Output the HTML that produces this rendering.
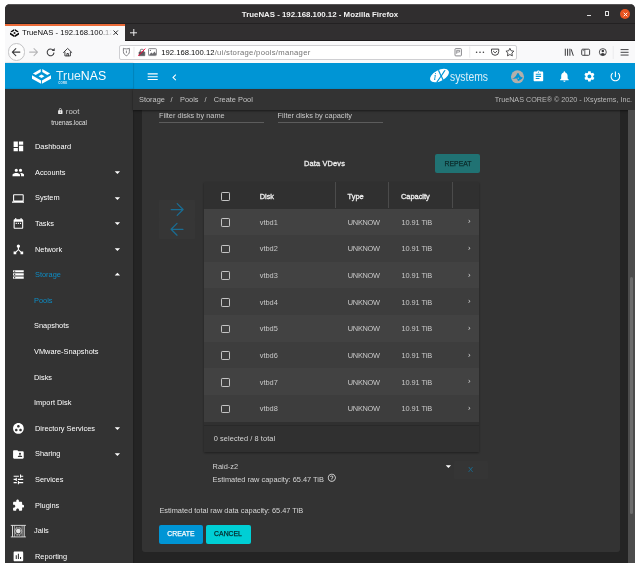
<!DOCTYPE html>
<html lang="en">
<head>
<meta charset="utf-8">
<title>TrueNAS - 192.168.100.12</title>
<style>
*{box-sizing:border-box;margin:0;padding:0}
html,body{width:640px;height:568px;overflow:hidden;background:#fff}
body{position:relative;font-family:"Liberation Sans",sans-serif;color:#fff}
.abs,.t{position:absolute}
.t{white-space:nowrap;line-height:1;transform:translateY(-50%)}
#win{position:absolute;left:5px;top:4px;width:630px;height:558.5px;background:#242424;border-radius:5px 5px 0 0;overflow:hidden}
#pg{position:absolute;left:-5px;top:-4px;width:640px;height:568px;filter:blur(0.3px)}
#titlebar{left:0;top:4px;width:640px;height:19.5px;background:#302e2f;border-top:0.7px solid #575556;border-bottom:0.6px solid #232122}
#tabbar{left:0;top:23.5px;width:640px;height:17.5px;background:#312f30;border-bottom:0.7px solid #1c1a1b}
#tab{left:0;top:24px;width:124.7px;height:17px;background:#f9f9fa}
#tabline{left:0;top:24.1px;width:124.7px;height:1.8px;background:#ea6a38}
#navbar{left:0;top:41px;width:640px;height:22px;background:#f9f9fa}
#urlbar{left:118.7px;top:44.6px;width:398.6px;height:15.2px;background:#fff;border:0.6px solid #cfcfd2;border-radius:2px}
#hdr{left:0;top:63px;width:640px;height:26px;background:#0095d5}
#side{left:0;top:89px;width:133px;height:479px;background:#333;box-shadow:0.5px 0 1.5px rgba(0,0,0,.35)}
#logoshadow{left:0;top:63px;width:133px;height:26px;box-shadow:0.5px 0 1.5px rgba(0,0,0,.3)}
#crumb{left:133px;top:89px;width:507px;height:21.4px;background:#333;box-shadow:0 1px 2px rgba(0,0,0,.5)}
#card{left:142px;top:89px;width:478px;height:463px;background:#333;border-radius:0 0 3px 3px}
#sbtrack{left:628px;top:110.4px;width:12px;height:458px;background:#4c4c4c}
#sbthumb{left:630px;top:277px;width:3px;height:237px;background:#6c6c6c;border-radius:1.5px}
.row{left:203.5px;width:276.2px;height:26.6px}
</style>
</head>
<body>
<div id="win"><div id="pg">
<div class="abs" id="titlebar"></div>
<div class="abs" id="tabbar"></div>
<div class="abs" id="tab"></div>
<div class="abs" id="tabline"></div>
<div class="abs" id="navbar"></div>
<div class="abs" id="urlbar"></div>
<div class="abs" id="hdr"></div>
<div class="abs" id="logoshadow"></div>
<div class="abs" id="card"></div>
<div class="abs" id="side"></div>
<div class="abs" id="crumb"></div>
<div class="abs" id="sbtrack"></div>
<div class="abs" id="sbthumb"></div>
<span class="t" style="left:35.00px;top:147.20px;font-size:7.40px;color:#fff">Dashboard</span>
<svg class="abs" style="left:11.60px;top:140.35px" width="12.80" height="12.80" viewBox="0 0 24 24"><path fill="#fff" d="M3 13h8V3H3v10zm0 8h8v-6H3v6zm10 0h8V11h-8v10zm0-18v6h8V3h-8z"/></svg>
<span class="t" style="left:35.00px;top:172.80px;font-size:7.40px;color:#fff">Accounts</span>
<svg class="abs" style="left:11.60px;top:165.95px" width="12.80" height="12.80" viewBox="0 0 24 24"><path fill="#fff" d="M16 11c1.66 0 2.99-1.34 2.99-3S17.66 5 16 5c-1.66 0-3 1.34-3 3s1.34 3 3 3zm-8 0c1.66 0 2.99-1.34 2.99-3S9.66 5 8 5C6.34 5 5 6.34 5 8s1.34 3 3 3zm0 2c-2.33 0-7 1.17-7 3.5V19h14v-2.500c0-2.330-4.670-3.500-7-3.500zm8 0c-.29 0-.62.02-.97.05 1.160.84 1.970 1.970 1.970 3.450V19h6v-2.500c0-2.330-4.670-3.500-7-3.500z"/></svg>
<svg class="abs" style="left:111.10px;top:165.95px" width="12.80" height="12.80" viewBox="0 0 24 24"><path fill="#fff" d="M7 10l5 5 5-5z"/></svg>
<span class="t" style="left:35.00px;top:198.40px;font-size:7.40px;color:#fff">System</span>
<svg class="abs" style="left:11.60px;top:191.55px" width="12.80" height="12.80" viewBox="0 0 24 24"><path fill="#fff" d="M20 18c1.100 0 2-.9 2-2V6c0-1.100-.9-2-2-2H4c-1.100 0-2 .9-2 2v10c0 1.100.9 2 2 2H0v2h24v-2h-4zM4 6h16v10H4V6z"/></svg>
<svg class="abs" style="left:111.10px;top:191.55px" width="12.80" height="12.80" viewBox="0 0 24 24"><path fill="#fff" d="M7 10l5 5 5-5z"/></svg>
<span class="t" style="left:35.00px;top:224.00px;font-size:7.40px;color:#fff">Tasks</span>
<svg class="abs" style="left:11.60px;top:217.15px" width="12.80" height="12.80" viewBox="0 0 24 24"><path fill="#fff" d="M9 11H7v2h2v-2zm4 0h-2v2h2v-2zm4 0h-2v2h2v-2zm2-7h-1V2h-2v2H8V2H6v2H5c-1.110 0-1.990.9-1.990 2L3 20c0 1.100.89 2 2 2h14c1.100 0 2-.9 2-2V6c0-1.100-.9-2-2-2zm0 16H5V9h14v11z"/></svg>
<svg class="abs" style="left:111.10px;top:217.15px" width="12.80" height="12.80" viewBox="0 0 24 24"><path fill="#fff" d="M7 10l5 5 5-5z"/></svg>
<span class="t" style="left:35.00px;top:249.60px;font-size:7.40px;color:#fff">Network</span>
<svg class="abs" style="left:11.60px;top:242.75px" width="12.80" height="12.80" viewBox="0 0 24 24"><path fill="#fff" d="M17 16l-4-4V8.820C14.160 8.400 15 7.300 15 6c0-1.660-1.340-3-3-3S9 4.340 9 6c0 1.300.84 2.400 2 2.820V12l-4 4H3v5h5v-3.050l4-4.200 4 4.200V21h5v-5h-4z"/></svg>
<svg class="abs" style="left:111.10px;top:242.75px" width="12.80" height="12.80" viewBox="0 0 24 24"><path fill="#fff" d="M7 10l5 5 5-5z"/></svg>
<span class="t" style="left:35.00px;top:275.20px;font-size:7.40px;color:#0d8cc4">Storage</span>
<svg class="abs" style="left:11.60px;top:268.35px" width="12.80" height="12.80" viewBox="0 0 24 24"><path fill="#fff" d="M2 20h20v-4H2v4zm2-3h2v2H4v-2zM2 4v4h20V4H2zm4 3H4V5h2v2zm-4 7h20v-4H2v4zm2-3h2v2H4v-2z"/></svg>
<svg class="abs" style="left:111.10px;top:268.35px" width="12.80" height="12.80" viewBox="0 0 24 24"><path fill="#fff" d="M7 14l5-5 5 5z"/></svg>
<span class="t" style="left:34.00px;top:300.80px;font-size:7.40px;color:#0d8cc4">Pools</span>
<span class="t" style="left:34.00px;top:326.40px;font-size:7.40px;color:#fff">Snapshots</span>
<span class="t" style="left:34.00px;top:352.00px;font-size:7.40px;color:#fff">VMware-Snapshots</span>
<span class="t" style="left:34.00px;top:377.60px;font-size:7.40px;color:#fff">Disks</span>
<span class="t" style="left:34.00px;top:403.20px;font-size:7.40px;color:#fff">Import Disk</span>
<span class="t" style="left:35.00px;top:428.80px;font-size:7.40px;color:#fff">Directory Services</span>
<svg class="abs" style="left:11.60px;top:421.95px" width="12.80" height="12.80" viewBox="0 0 24 24"><path fill="#fff" d="M12 2C6.480 2 2 6.480 2 12s4.480 10 10 10 10-4.480 10-10S17.520 2 12 2zM8 17.500c-1.380 0-2.500-1.120-2.500-2.500s1.120-2.500 2.500-2.500 2.500 1.120 2.500 2.500-1.120 2.500-2.500 2.500zM9.500 8c0-1.380 1.120-2.500 2.500-2.500s2.500 1.120 2.500 2.500-1.120 2.500-2.500 2.500S9.500 9.380 9.500 8zm6.500 9.500c-1.380 0-2.500-1.120-2.500-2.500s1.120-2.500 2.500-2.500 2.500 1.120 2.500 2.500-1.120 2.500-2.500 2.500z"/></svg>
<svg class="abs" style="left:111.10px;top:421.95px" width="12.80" height="12.80" viewBox="0 0 24 24"><path fill="#fff" d="M7 10l5 5 5-5z"/></svg>
<span class="t" style="left:35.00px;top:454.40px;font-size:7.40px;color:#fff">Sharing</span>
<svg class="abs" style="left:11.60px;top:447.55px" width="12.80" height="12.80" viewBox="0 0 24 24"><path fill="#fff" d="M20 6h-8l-2-2H4c-1.100 0-1.990.9-1.990 2L2 18c0 1.100.9 2 2 2h16c1.100 0 2-.9 2-2V8c0-1.100-.9-2-2-2zm-5 3c1.100 0 2 .9 2 2s-.9 2-2 2-2-.9-2-2 .9-2 2-2zm4 8h-8v-1c0-1.330 2.670-2 4-2s4 .67 4 2v1z"/></svg>
<svg class="abs" style="left:111.10px;top:447.55px" width="12.80" height="12.80" viewBox="0 0 24 24"><path fill="#fff" d="M7 10l5 5 5-5z"/></svg>
<span class="t" style="left:35.00px;top:480.00px;font-size:7.40px;color:#fff">Services</span>
<svg class="abs" style="left:11.60px;top:473.15px" width="12.80" height="12.80" viewBox="0 0 24 24"><path fill="#fff" d="M3 17v2h6v-2H3zM3 5v2h10V5H3zm10 16v-2h8v-2h-8v-2h-2v6h2zM7 9v2H3v2h4v2h2V9H7zm14 4v-2H11v2h10zm-6-4h2V7h4V5h-4V3h-2v6z"/></svg>
<span class="t" style="left:35.00px;top:505.60px;font-size:7.40px;color:#fff">Plugins</span>
<svg class="abs" style="left:11.60px;top:498.75px" width="12.80" height="12.80" viewBox="0 0 24 24"><path fill="#fff" d="M20.500 11H19V7c0-1.100-.9-2-2-2h-4V3.500C13 2.120 11.880 1 10.500 1S8 2.120 8 3.500V5H4c-1.100 0-1.990.9-1.990 2v3.800H3.500c1.490 0 2.700 1.210 2.700 2.700s-1.210 2.700-2.700 2.700H2V20c0 1.100.9 2 2 2h3.800v-1.500c0-1.490 1.210-2.700 2.700-2.700 1.490 0 2.700 1.210 2.700 2.700V22H17c1.100 0 2-.9 2-2v-4h1.500c1.380 0 2.500-1.120 2.500-2.500S21.880 11 20.500 11z"/></svg>
<span class="t" style="left:34.00px;top:531.20px;font-size:7.40px;color:#fff">Jails</span>
<span class="t" style="left:35.00px;top:556.80px;font-size:7.40px;color:#fff">Reporting</span>
<svg class="abs" style="left:11.60px;top:549.95px" width="12.80" height="12.80" viewBox="0 0 24 24"><path fill="#fff" d="M19 3H5c-1.100 0-2 .9-2 2v14c0 1.100.9 2 2 2h14c1.100 0 2-.9 2-2V5c0-1.100-.9-2-2-2zM9 17H7v-7h2v7zm4 0h-2V7h2v10zm4 0h-2v-4h2v4z"/></svg>
<svg class="abs" style="left:57.40px;top:107.70px" width="6.60" height="6.60" viewBox="0 0 24 24"><path fill="#eee" d="M18 8h-1V6c0-2.760-2.240-5-5-5S7 3.240 7 6v2H6c-1.100 0-2 .9-2 2v10c0 1.100.9 2 2 2h12c1.100 0 2-.9 2-2V10c0-1.100-.9-2-2-2zm-6 9c-1.100 0-2-.9-2-2s.9-2 2-2 2 .9 2 2-.9 2-2 2zm3.100-9H8.900V6c0-1.710 1.390-3.100 3.100-3.100 1.710 0 3.100 1.390 3.100 3.100v2z"/></svg>
<span class="t" style="left:65.80px;top:111.75px;font-size:7.90px;color:#c8c8c8">root</span>
<span class="t" style="left:69.00px;top:122.75px;font-size:6.30px;color:#e0e0e0;transform:translate(-50%,-50%)">truenas.local</span>
<svg class="abs" style="left:145.80px;top:69.90px" width="13.40" height="13.40" viewBox="0 0 24 24"><path fill="#fff" d="M3 18h18v-2H3v2zm0-5h18v-2H3v2zm0-7v2h18V6H3z"/></svg>
<svg class="abs" style="left:167.60px;top:70.50px" width="12.80" height="12.80" viewBox="0 0 24 24"><path fill="#fff" d="M15.410 7.410L14 6l-6 6 6 6 1.410-1.410L10.830 12z"/></svg>
<svg class="abs" style="left:532.40px;top:70.20px" width="12.80" height="12.80" viewBox="0 0 24 24"><path fill="#fff" d="M19 3h-4.180C14.400 1.840 13.300 1 12 1c-1.300 0-2.400.84-2.820 2H5c-1.100 0-2 .9-2 2v14c0 1.100.9 2 2 2h14c1.100 0 2-.9 2-2V5c0-1.100-.9-2-2-2zm-7 0c.55 0 1 .45 1 1s-.45 1-1 1-1-.45-1-1 .45-1 1-1zm2 14H7v-2h7v2zm3-4H7v-2h10v2zm0-4H7V7h10v2z"/></svg>
<svg class="abs" style="left:558.00px;top:70.20px" width="12.80" height="12.80" viewBox="0 0 24 24"><path fill="#fff" d="M12 22c1.100 0 2-.9 2-2h-4c0 1.100.89 2 2 2zm6-6v-5c0-3.070-1.640-5.640-4.500-6.320V4c0-.83-.67-1.500-1.500-1.500s-1.500.67-1.500 1.500v.68C7.630 5.360 6 7.920 6 11v5l-2 2v1h16v-1l-2-2z"/></svg>
<svg class="abs" style="left:583.40px;top:70.20px" width="12.80" height="12.80" viewBox="0 0 24 24"><path fill="#fff" d="M19.140 12.940c.04-.3.06-.61.06-.94 0-.32-.02-.64-.07-.94l2.030-1.580c.18-.14.23-.41.12-.61l-1.920-3.320c-.12-.22-.37-.29-.59-.22l-2.390.96c-.5-.38-1.030-.7-1.620-.94l-.36-2.540c-.04-.24-.24-.41-.48-.41h-3.840c-.24 0-.43.17-.47.41l-.36 2.540c-.59.24-1.130.57-1.620.94l-2.390-.96c-.22-.08-.47 0-.59.22L2.740 8.870c-.12.21-.08.47.12.61l2.030 1.580c-.05.3-.09.63-.09.94s.02.64.07.94l-2.030 1.580c-.18.14-.23.41-.12.61l1.920 3.320c.12.22.37.29.59.22l2.390-.96c.5.38 1.030.7 1.620.94l.36 2.540c.05.24.24.41.48.41h3.840c.24 0 .44-.17.47-.41l.36-2.540c.59-.24 1.130-.56 1.620-.94l2.390.96c.22.08.47 0 .59-.22l1.920-3.320c.12-.22.07-.47-.12-.61l-2.010-1.580zM12 15.600c-1.980 0-3.600-1.620-3.600-3.600s1.620-3.600 3.600-3.600 3.600 1.620 3.600 3.600-1.620 3.600-3.600 3.600z"/></svg>
<svg class="abs" style="left:609.20px;top:70.20px" width="12.80" height="12.80" viewBox="0 0 24 24"><path fill="#fff" d="M13 3h-2v10h2V3zm4.830 2.170l-1.420 1.420C17.990 7.860 19 9.810 19 12c0 3.870-3.130 7-7 7s-7-3.130-7-7c0-2.190 1.010-4.140 2.580-5.420L6.170 5.170C4.230 6.820 3 9.260 3 12c0 4.970 4.030 9 9 9s9-4.030 9-9c0-2.740-1.230-5.180-3.170-6.830z"/></svg>
<span class="t" style="left:139.00px;top:100.25px;font-size:7.40px;color:#c4c4c4">Storage</span>
<span class="t" style="left:170.60px;top:100.25px;font-size:7.40px;color:#c4c4c4">/</span>
<span class="t" style="left:180.00px;top:100.25px;font-size:7.40px;color:#c4c4c4">Pools</span>
<span class="t" style="left:204.40px;top:100.25px;font-size:7.40px;color:#c4c4c4">/</span>
<span class="t" style="left:213.80px;top:100.25px;font-size:7.40px;color:#c4c4c4">Create Pool</span>
<span class="t" style="left:632.00px;top:100.25px;font-size:7.20px;color:#b9b9b9;transform:translate(-100%,-50%)">TrueNAS CORE® © 2020 - iXsystems, Inc.</span>
<span class="t" style="left:159.00px;top:115.55px;font-size:7.40px;color:#c9c9c9">Filter disks by name</span>
<div class="abs" style="left:159px;top:122.1px;width:105px;height:0.6px;background:#5c5c5c"></div>
<span class="t" style="left:277.60px;top:115.55px;font-size:7.40px;color:#c9c9c9">Filter disks by capacity</span>
<div class="abs" style="left:277.6px;top:122.1px;width:105px;height:0.6px;background:#5c5c5c"></div>
<span class="t" style="left:324.50px;top:164.45px;font-size:7.40px;color:#ececec;letter-spacing:0.160px;transform:translate(-50%,-50%);-webkit-text-stroke:0.3px #ececec">Data VDevs</span>
<div class="abs" style="left:435.3px;top:154px;width:44.4px;height:19.2px;background:#207273;border-radius:2px"></div>
<span class="t" style="left:457.70px;top:163.85px;font-size:7.70px;color:#0b2a2a;letter-spacing:0.000px;transform:translate(-50%,-50%);-webkit-text-stroke:0.25px #0b2a2a;transform:translate(-50%,-50%) scaleX(.89)">REPEAT</span>
<div class="abs" style="left:158.6px;top:200.1px;width:36.3px;height:19.1px;background:#363636;border-radius:1.2px"></div>
<div class="abs" style="left:158.6px;top:219.4px;width:36.3px;height:19.3px;background:#363636;border-radius:1.2px"></div>
<svg class="abs" style="left:165px;top:200px" width="24" height="40" viewBox="165 200 24 40" fill="none" stroke="#1a6d93" stroke-width="1.25" stroke-linecap="round" stroke-linejoin="round"><path d="M171.2 209.5H183M177.2 203.6l5.9 5.9-5.9 5.900"/><path d="M183 229.300H171.200M177 223.400l-5.900 5.900 5.900 5.900"/></svg>
<div class="abs" style="left:203.6px;top:182.2px;width:275.4px;height:270px;background:#303030;box-shadow:0 1px 2px rgba(0,0,0,.38)"></div>
<div class="abs" style="left:203.6px;top:208.50px;width:275.4px;height:26.70px;background:#424242"></div>
<div class="abs" style="left:203.6px;top:235.14px;width:275.4px;height:26.70px;background:#3d3d3d"></div>
<div class="abs" style="left:203.6px;top:261.78px;width:275.4px;height:26.70px;background:#424242"></div>
<div class="abs" style="left:203.6px;top:288.42px;width:275.4px;height:26.70px;background:#3d3d3d"></div>
<div class="abs" style="left:203.6px;top:315.06px;width:275.4px;height:26.70px;background:#424242"></div>
<div class="abs" style="left:203.6px;top:341.70px;width:275.4px;height:26.70px;background:#3d3d3d"></div>
<div class="abs" style="left:203.6px;top:368.34px;width:275.4px;height:26.70px;background:#424242"></div>
<div class="abs" style="left:203.6px;top:394.98px;width:275.4px;height:26.70px;background:#3d3d3d"></div>
<div class="abs" style="left:203.6px;top:425px;width:275.4px;height:0.6px;background:#292929"></div>
<div class="abs" style="left:334.6px;top:182.2px;width:0.6px;height:26.3px;background:#4b4b4b"></div>
<div class="abs" style="left:388.3px;top:182.2px;width:0.6px;height:26.3px;background:#4b4b4b"></div>
<div class="abs" style="left:452.2px;top:182.2px;width:0.6px;height:26.3px;background:#4b4b4b"></div>
<div class="abs" style="left:221.00px;top:192.30px;width:8.8px;height:8.8px;border:1.05px solid #c4c4c4;border-radius:1.2px"></div>
<span class="t" style="left:259.70px;top:197.15px;font-size:7.40px;color:#f0f0f0;-webkit-text-stroke:0.3px #f0f0f0">Disk</span>
<span class="t" style="left:347.60px;top:197.15px;font-size:7.40px;color:#f0f0f0;-webkit-text-stroke:0.3px #f0f0f0">Type</span>
<span class="t" style="left:401.00px;top:197.15px;font-size:7.40px;color:#f0f0f0;-webkit-text-stroke:0.3px #f0f0f0">Capacity</span>
<div class="abs" style="left:221.00px;top:217.90px;width:8.8px;height:8.8px;border:1.05px solid #c4c4c4;border-radius:1.2px"></div>
<span class="t" style="left:259.70px;top:222.75px;font-size:7.40px;color:#c8c8c8">vtbd1</span>
<span class="t" style="left:347.80px;top:222.75px;font-size:7.40px;color:#c8c8c8;letter-spacing:-0.280px">UNKNOW</span>
<span class="t" style="left:401.50px;top:222.75px;font-size:7.40px;color:#c8c8c8;letter-spacing:-0.080px">10.91 TiB</span>
<svg class="abs" style="left:465.70px;top:218.30px" width="6.60" height="6.60" viewBox="0 0 24 24"><path fill="#e0e0e0" d="M10 6L8.590 7.410 13.170 12l-4.580 4.590L10 18l6-6z"/></svg>
<div class="abs" style="left:221.00px;top:244.57px;width:8.8px;height:8.8px;border:1.05px solid #c4c4c4;border-radius:1.2px"></div>
<span class="t" style="left:259.70px;top:249.42px;font-size:7.40px;color:#c8c8c8">vtbd2</span>
<span class="t" style="left:347.80px;top:249.42px;font-size:7.40px;color:#c8c8c8;letter-spacing:-0.280px">UNKNOW</span>
<span class="t" style="left:401.50px;top:249.42px;font-size:7.40px;color:#c8c8c8;letter-spacing:-0.080px">10.91 TiB</span>
<svg class="abs" style="left:465.70px;top:244.97px" width="6.60" height="6.60" viewBox="0 0 24 24"><path fill="#e0e0e0" d="M10 6L8.590 7.410 13.170 12l-4.580 4.590L10 18l6-6z"/></svg>
<div class="abs" style="left:221.00px;top:271.24px;width:8.8px;height:8.8px;border:1.05px solid #c4c4c4;border-radius:1.2px"></div>
<span class="t" style="left:259.70px;top:276.09px;font-size:7.40px;color:#c8c8c8">vtbd3</span>
<span class="t" style="left:347.80px;top:276.09px;font-size:7.40px;color:#c8c8c8;letter-spacing:-0.280px">UNKNOW</span>
<span class="t" style="left:401.50px;top:276.09px;font-size:7.40px;color:#c8c8c8;letter-spacing:-0.080px">10.91 TiB</span>
<svg class="abs" style="left:465.70px;top:271.64px" width="6.60" height="6.60" viewBox="0 0 24 24"><path fill="#e0e0e0" d="M10 6L8.590 7.410 13.170 12l-4.580 4.590L10 18l6-6z"/></svg>
<div class="abs" style="left:221.00px;top:297.91px;width:8.8px;height:8.8px;border:1.05px solid #c4c4c4;border-radius:1.2px"></div>
<span class="t" style="left:259.70px;top:302.76px;font-size:7.40px;color:#c8c8c8">vtbd4</span>
<span class="t" style="left:347.80px;top:302.76px;font-size:7.40px;color:#c8c8c8;letter-spacing:-0.280px">UNKNOW</span>
<span class="t" style="left:401.50px;top:302.76px;font-size:7.40px;color:#c8c8c8;letter-spacing:-0.080px">10.91 TiB</span>
<svg class="abs" style="left:465.70px;top:298.31px" width="6.60" height="6.60" viewBox="0 0 24 24"><path fill="#e0e0e0" d="M10 6L8.590 7.410 13.170 12l-4.580 4.590L10 18l6-6z"/></svg>
<div class="abs" style="left:221.00px;top:324.58px;width:8.8px;height:8.8px;border:1.05px solid #c4c4c4;border-radius:1.2px"></div>
<span class="t" style="left:259.70px;top:329.43px;font-size:7.40px;color:#c8c8c8">vtbd5</span>
<span class="t" style="left:347.80px;top:329.43px;font-size:7.40px;color:#c8c8c8;letter-spacing:-0.280px">UNKNOW</span>
<span class="t" style="left:401.50px;top:329.43px;font-size:7.40px;color:#c8c8c8;letter-spacing:-0.080px">10.91 TiB</span>
<svg class="abs" style="left:465.70px;top:324.98px" width="6.60" height="6.60" viewBox="0 0 24 24"><path fill="#e0e0e0" d="M10 6L8.590 7.410 13.170 12l-4.580 4.590L10 18l6-6z"/></svg>
<div class="abs" style="left:221.00px;top:351.25px;width:8.8px;height:8.8px;border:1.05px solid #c4c4c4;border-radius:1.2px"></div>
<span class="t" style="left:259.70px;top:356.10px;font-size:7.40px;color:#c8c8c8">vtbd6</span>
<span class="t" style="left:347.80px;top:356.10px;font-size:7.40px;color:#c8c8c8;letter-spacing:-0.280px">UNKNOW</span>
<span class="t" style="left:401.50px;top:356.10px;font-size:7.40px;color:#c8c8c8;letter-spacing:-0.080px">10.91 TiB</span>
<svg class="abs" style="left:465.70px;top:351.65px" width="6.60" height="6.60" viewBox="0 0 24 24"><path fill="#e0e0e0" d="M10 6L8.590 7.410 13.170 12l-4.580 4.590L10 18l6-6z"/></svg>
<div class="abs" style="left:221.00px;top:377.92px;width:8.8px;height:8.8px;border:1.05px solid #c4c4c4;border-radius:1.2px"></div>
<span class="t" style="left:259.70px;top:382.77px;font-size:7.40px;color:#c8c8c8">vtbd7</span>
<span class="t" style="left:347.80px;top:382.77px;font-size:7.40px;color:#c8c8c8;letter-spacing:-0.280px">UNKNOW</span>
<span class="t" style="left:401.50px;top:382.77px;font-size:7.40px;color:#c8c8c8;letter-spacing:-0.080px">10.91 TiB</span>
<svg class="abs" style="left:465.70px;top:378.32px" width="6.60" height="6.60" viewBox="0 0 24 24"><path fill="#e0e0e0" d="M10 6L8.590 7.410 13.170 12l-4.580 4.590L10 18l6-6z"/></svg>
<div class="abs" style="left:221.00px;top:404.59px;width:8.8px;height:8.8px;border:1.05px solid #c4c4c4;border-radius:1.2px"></div>
<span class="t" style="left:259.70px;top:409.44px;font-size:7.40px;color:#c8c8c8">vtbd8</span>
<span class="t" style="left:347.80px;top:409.44px;font-size:7.40px;color:#c8c8c8;letter-spacing:-0.280px">UNKNOW</span>
<span class="t" style="left:401.50px;top:409.44px;font-size:7.40px;color:#c8c8c8;letter-spacing:-0.080px">10.91 TiB</span>
<svg class="abs" style="left:465.70px;top:404.99px" width="6.60" height="6.60" viewBox="0 0 24 24"><path fill="#e0e0e0" d="M10 6L8.590 7.410 13.170 12l-4.580 4.590L10 18l6-6z"/></svg>
<span class="t" style="left:213.80px;top:439.45px;font-size:7.40px;color:#d6d6d6;letter-spacing:0.070px">0 selected / 8 total</span>
<span class="t" style="left:212.60px;top:466.75px;font-size:7.40px;color:#d6d6d6">Raid-z2</span>
<span class="t" style="left:212.60px;top:480.45px;font-size:7.40px;color:#d6d6d6">Estimated raw capacity: 65.47 TiB</span>
<svg class="abs" style="left:327.00px;top:472.60px" width="9.60" height="9.60" viewBox="0 0 24 24"><path fill="#e0e0e0" d="M11 18h2v-2h-2v2zm1-16C6.480 2 2 6.480 2 12s4.480 10 10 10 10-4.480 10-10S17.520 2 12 2zm0 18c-4.410 0-8-3.590-8-8s3.590-8 8-8 8 3.590 8 8-3.590 8-8 8zm0-14c-2.210 0-4 1.790-4 4h2c0-1.100.9-2 2-2s2 .9 2 2c0 2-3 1.750-3 5h2c0-2.250 3-2.500 3-5 0-2.210-1.790-4-4-4z"/></svg>
<svg class="abs" style="left:442.10px;top:459.80px" width="12.80" height="12.80" viewBox="0 0 24 24"><path fill="#fff" d="M7 10l5 5 5-5z"/></svg>
<div class="abs" style="left:453.6px;top:461px;width:34.3px;height:18.4px;background:#353535;border-radius:1.2px"></div>
<span class="t" style="left:470.70px;top:470.05px;font-size:7.80px;color:#176f97;transform:translate(-50%,-50%)">X</span>
<span class="t" style="left:159.40px;top:511.25px;font-size:7.40px;color:#d6d6d6">Estimated total raw data capacity: 65.47 TiB</span>
<div class="abs" style="left:159px;top:525px;width:43.8px;height:18.8px;background:#0095d5;border-radius:2px"></div>
<span class="t" style="left:181.10px;top:534.25px;font-size:7.70px;color:#fff;letter-spacing:0.000px;transform:translate(-50%,-50%);-webkit-text-stroke:0.25px #fff;transform:translate(-50%,-50%) scaleX(.89)">CREATE</span>
<div class="abs" style="left:205.8px;top:525px;width:45.2px;height:18.8px;background:#00cfd5;border-radius:2px"></div>
<span class="t" style="left:228.30px;top:534.25px;font-size:7.70px;color:#06292a;letter-spacing:0.000px;transform:translate(-50%,-50%);-webkit-text-stroke:0.25px #06292a;transform:translate(-50%,-50%) scaleX(.89)">CANCEL</span>
<span class="t" style="left:320.00px;top:14.65px;font-size:7.86px;color:#f2f2f2;font-weight:bold;transform:translate(-50%,-50%)">TrueNAS - 192.168.100.12 - Mozilla Firefox</span>
<div class="abs" style="left:586.5px;top:15px;width:4.5px;height:0.8px;background:#e0e0e0"></div>
<div class="abs" style="left:604.7px;top:11.4px;width:4.6px;height:4.8px;border:0.9px solid #e4e4e4;border-radius:0.5px"></div>
<div class="abs" style="left:620px;top:8.9px;width:10.2px;height:10.2px;border-radius:50%;background:#e95420"></div>
<svg class="abs" style="left:622.6px;top:11.5px" width="5" height="5" viewBox="0 0 5 5"><path d="M0.700.7L4.300 4.300M4.300.7L0.700 4.300" stroke="#fff" stroke-width="0.95" fill="none"/></svg>
<span class="t" style="left:22px;top:33.1px;font-size:7.7px;color:#0c0c0d;width:91px;overflow:hidden;-webkit-mask-image:linear-gradient(90deg,#000 78px,transparent 90px)">TrueNAS - 192.168.100.12</span>
<svg class="abs" style="left:113.2px;top:30.400px" width="5.4" height="5.4" viewBox="0 0 5.400 5.400"><path d="M0.500.5L4.900 4.900M4.900.5L0.500 4.900" stroke="#2a2a2c" stroke-width="1" fill="none"/></svg>
<svg class="abs" style="left:129.900px;top:28.800px" width="7.6" height="7.6" viewBox="0 0 7.600 7.600"><path d="M3.800 0V7.600M0 3.800H7.600" stroke="#f4f4f4" stroke-width="0.95" fill="none"/></svg>
<span class="t" style="left:161.30px;top:52.75px;font-size:7.66px;color:#0c0c0d">192.168.100.12</span>
<span class="t" style="left:214.70px;top:52.75px;font-size:7.70px;color:#737373;letter-spacing:0.280px">/ui/storage/pools/manager</span>
<div class="abs" style="left:7.5px;top:43.35px;width:17.5px;height:17.500px;border-radius:50%;background:#fdfdfd;border:0.6px solid #c3c3c5"></div>
<svg class="abs" style="left:8px;top:44px" width="70" height="18" viewBox="8 44 70 18" fill="none" stroke-width="1.05" stroke-linecap="round" stroke-linejoin="round"><path d="M19.900 52.100H12.400M15.800 48.600l-3.500 3.500 3.500 3.500" stroke="#3b3b3d"/><path d="M29.600 52.100H37.400M34 48.600l3.500 3.500-3.500 3.500" stroke="#b6b6b8"/><path d="M53.300 50.300A3.400 3.400 0 1 0 53.950 52.900" stroke="#3b3b3d"/><path d="M54.700 48.100v3h-3z" fill="#3b3b3d" stroke="none"/><path d="M63.500 52.500L67.600 48.400 71.800 52.500M64.900 52v3.900h5.500V52M66.900 55.800v-2.300h1.500v2.300" stroke="#3b3b3d" stroke-width="0.95"/></svg>
<svg class="abs" style="left:120px;top:46px" width="40" height="13" viewBox="120 46 40 13" ><path d="M126.400 48.900c1.200 0 2.200-.25 3-.6v3.300c0 2-1.300 3.300-3 4.100-1.700-.8-3-2.100-3-4.100v-3.300c.8.35 1.800.6 3 .6z" stroke="#6c6c70" stroke-width="0.85" fill="none"/><path d="M126.400 50.600v2.500" stroke="#6c6c70" stroke-width="0.8"/><path d="M134 46.900v10.500" stroke="#dededf" stroke-width="0.6"/><path d="M139 52h5.800v3.700H139zM140.200 52v-1.200a1.700 1.700 0 0 1 3.400 0V52" fill="#5c5c5f" stroke="#5c5c5f" stroke-width="0.6"/><path d="M140.700 51.500v-.9a1.200 1.200 0 0 1 2.400 0v.9z" fill="#fff"/><path d="M138.300 55.900L145.300 48.600" stroke="#ff0039" stroke-width="0.95"/><rect x="148.500" y="48.650" width="7.900" height="6.900" rx="0.8" stroke="#6c6c70" stroke-width="0.8" fill="none"/><path d="M149 55l2.300-2.600 1.500 1.400 1.600-2.300 1.700 2.200V55z" fill="#6c6c70"/><circle cx="150.400" cy="50.400" r="0.650" fill="#6c6c70"/></svg>
<svg class="abs" style="left:452px;top:46px" width="64" height="13" viewBox="452 46 64 13" ><rect x="455" y="48.600" width="6.400" height="7.300" rx="0.800" stroke="#747478" stroke-width="0.85" fill="none"/><path d="M456.700 50.300v3.500M456.700 50.400h2.900v1.600h-2.900" stroke="#747478" stroke-width="0.7" fill="none"/><path d="M469.700 46.500v11.200" stroke="#dededf" stroke-width="0.6"/><circle cx="476.600" cy="52.200" r="0.800" fill="#3b3b3d"/><circle cx="480" cy="52.200" r="0.800" fill="#3b3b3d"/><circle cx="483.400" cy="52.200" r="0.800" fill="#3b3b3d"/><path d="M491.500 49.100h7.200v2.600a3.600 3.600 0 0 1-7.200 0z" stroke="#3b3b3d" stroke-width="0.95" fill="none" stroke-linejoin="round"/><path d="M493.400 51.300l1.700 1.600 1.700-1.600" stroke="#3b3b3d" stroke-width="0.9" fill="none" stroke-linecap="round" stroke-linejoin="round"/><path d="M509.900 48.300l1.220 2.480 2.730.4-1.980 1.930.47 2.720-2.440-1.290-2.440 1.290.47-2.720-1.980-1.930 2.730-.4z" stroke="#3b3b3d" stroke-width="0.9" fill="none" stroke-linejoin="round"/></svg>
<svg class="abs" style="left:562px;top:46px" width="70" height="13" viewBox="562 46 70 13" fill="none"><path d="M565.300 49.100v6.300M567.600 49.100v6.300M569.900 49.100v6.300M571.300 49.600l1.900 5.800" stroke="#3b3b3d" stroke-width="1" stroke-linecap="round"/><rect x="581.700" y="49.200" width="7.900" height="6.100" rx="1" stroke="#3b3b3d" stroke-width="0.95" fill="none"/><path d="M584.800 49.200v6.100" stroke="#3b3b3d" stroke-width="0.8"/><path d="M582.600 50.600h1.400" stroke="#3b3b3d" stroke-width="0.6"/><circle cx="602.800" cy="52.100" r="3.500" stroke="#3b3b3d" stroke-width="0.85" fill="none"/><circle cx="602.800" cy="51.100" r="1.250" fill="#3b3b3d"/><path d="M600.500 54.600a2.400 2.400 0 0 1 4.600 0 3.300 3.300 0 0 1-4.600 0z" fill="#3b3b3d"/><path d="M613.200 44.500v15" stroke="#e2e2e4" stroke-width="0.6"/><path d="M621 49.600h7.200M621 52.300h7.200M621 55.050h7.200" stroke="#3b3b3d" stroke-width="0.95" stroke-linecap="round"/></svg>
<svg class="abs" style="left:32.06px;top:69px" width="19" height="14.7" viewBox="65 80 304 235" preserveAspectRatio="none"><path fill="#fff" d="M80 152L205 80V128L125 175Z M354 152L229 80V128L309 175Z M170 195L217 167 264 195 217 223Z M65 180L210 262V315L65 235Z M369 180L224 262V315L369 235Z"/></svg>
<svg class="abs" style="left:10px;top:28.9px" width="9.1" height="8.2" viewBox="65 80 304 235" preserveAspectRatio="none"><path fill="#0c0c0d" d="M80 152L205 80V128L125 175Z M354 152L229 80V128L309 175Z M170 195L217 167 264 195 217 223Z M65 180L210 262V315L65 235Z M369 180L224 262V315L369 235Z"/></svg>
<svg class="abs" style="left:55px;top:66px" width="56" height="22" viewBox="55 66 56 22"><text x="56" y="79.500" font-family="Liberation Sans, sans-serif" font-size="12.600" fill="#fff" textLength="50.200" lengthAdjust="spacingAndGlyphs"><tspan fill-opacity="0.88">True</tspan>NAS</text><text x="58.300" y="84.400" font-family="Liberation Sans, sans-serif" font-size="2.900" font-weight="bold" fill="#d8eefa" textLength="8.900" lengthAdjust="spacing">CORE</text></svg>
<svg class="abs" style="left:428px;top:66px" width="66" height="22" viewBox="428 66 66 22"><ellipse cx="439.500" cy="75.600" rx="10.200" ry="5.500" transform="rotate(-27 439.500 75.600)" fill="#fff"/><text x="433.400" y="80.200" font-family="Liberation Serif, serif" font-style="italic" font-size="10.500" fill="#0095d5">i</text><text x="436.600" y="82.300" font-family="Liberation Sans, sans-serif" font-size="17" fill="#0095d5" textLength="9" lengthAdjust="spacingAndGlyphs" transform="skewX(-6)" style="transform-origin:441px 76px">X</text><text x="450" y="80.600" font-family="Liberation Sans, sans-serif" font-size="12" fill="#fff" fill-opacity="0.86" textLength="38" lengthAdjust="spacingAndGlyphs">systems</text></svg>
<svg class="abs" style="left:510px;top:69px" width="16" height="16" viewBox="510 69 16 16"><circle cx="517.500" cy="76.800" r="6.550" fill="#b2afab"/><path d="M511.900 78.500C514 78.300 515.800 76.800 516.700 74.400 517.100 73.500 517.600 73 518.050 73c.6 0 .9.900 1.400 1.900.7 1.400 1.900 2.300 3.450 2.700-.6.900-1.200 1.500-1.950 2-.9.700-1.600 1.200-2.350 1.300-.7-.2-1.200-.700-1.300-1.500-.100-.5-.300-.8-.800-.8-.9.100-2.700.300-4.550-.100z" fill="#0095d5"/><circle cx="518.250" cy="78.250" r="0.700" fill="#b2afab"/></svg>
<svg class="abs" style="left:10px;top:524px" width="17" height="14" viewBox="10 524 17 14" fill="none"><path d="M10.800 525.400H25.900M10.800 536.900H25.900" stroke="#e2e2e2" stroke-width="0.9"/><path d="M12.500 525.400V536.900M24.200 525.400V536.900" stroke="#e2e2e2" stroke-width="0.95"/><path d="M14.600 525.400V536.900M22.100 525.400V536.900" stroke="#e2e2e2" stroke-width="0.6"/><circle cx="18.300" cy="531.300" r="3.500" stroke="#e2e2e2" stroke-width="0.6" fill="none"/><circle cx="18.300" cy="531.100" r="2.400" fill="#e2e2e2"/><path d="M16.200 527.300h1M19.400 527.300h1M16.600 535.300h1M19.200 535.300h1" stroke="#e2e2e2" stroke-width="0.800"/></svg>
</div></div>
</body>
</html>
